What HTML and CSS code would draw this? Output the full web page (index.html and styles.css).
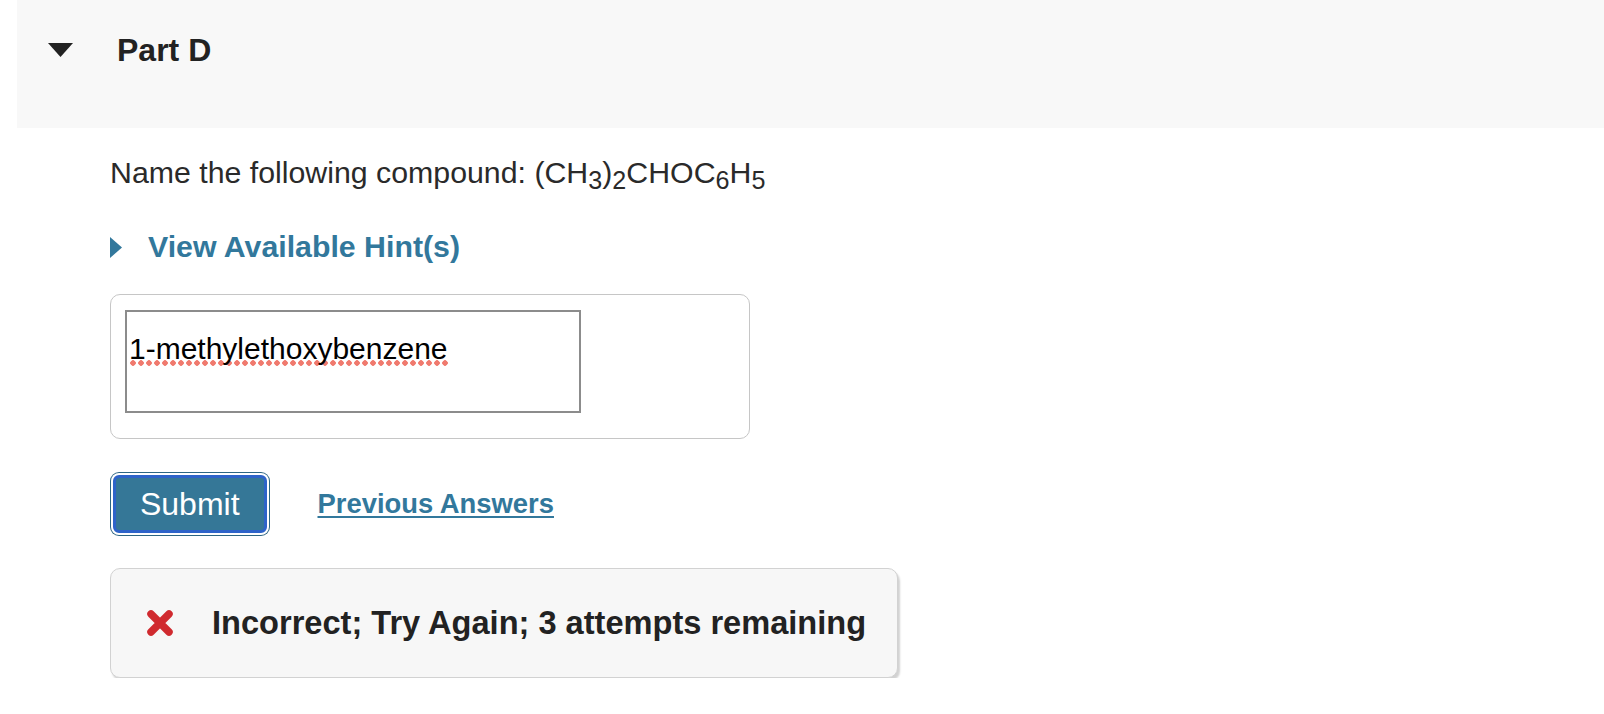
FILE: index.html
```html
<!DOCTYPE html>
<html>
<head>
<meta charset="utf-8">
<link rel="stylesheet" href="styles.css">
</head>
<body>
<div class="part-header">
  <div class="part-row">
    <svg class="caret-down" width="25" height="14" viewBox="0 0 25 14"><polygon points="0,0 25,0 12.5,14" fill="#222"/></svg>
    <span class="part-title">Part D</span>
  </div>
</div>
<div class="content">
  <p class="question">Name the following compound: (CH<sub>3</sub>)<sub>2</sub>CHOC<sub>6</sub>H<sub>5</sub></p>
  <div class="hint">
    <svg class="caret-right" width="12" height="21" viewBox="0 0 12 21"><polygon points="0,0 12,10.5 0,21" fill="#32789c"/></svg>
    <span class="hint-text">View Available Hint(s)</span>
  </div>
  <div class="answer-box">
    <div class="answer-input"><span class="misspelled">1-methylethoxybenzene</span></div>
  </div>
  <div class="actions">
    <button class="submit">Submit</button>
    <a class="prev" href="#">Previous Answers</a>
  </div>
  <div class="feedback">
    <svg class="xicon" width="28" height="28" viewBox="0 0 28 28"><path d="M5 5 L23 23 M23 5 L5 23" stroke="#d02a2f" stroke-width="7.5" stroke-linecap="round"/></svg>
    <span class="feedback-text">Incorrect; Try Again; 3 attempts remaining</span>
  </div>
</div>
</body>
</html>
```
FILE: styles.css
```css
html, body {
  margin: 0;
  padding: 0;
  background: #fff;
  font-family: "Liberation Sans", Arial, sans-serif;
  color: #222;
}
.part-header {
  margin-left: 17px;
  height: 128px;
  background: #f8f8f8;
  box-sizing: border-box;
  padding-top: 25px;
  padding-left: 31px;
}
.part-row {
  display: flex;
  align-items: center;
  height: 50px;
}
.caret-down {
  display: block;
  margin-right: 44px;
}
.part-title {
  font-size: 32px;
  font-weight: bold;
  color: #222;
}
.content {
  padding-left: 110px;
}
.question {
  margin: 28px 0 0 0;
  font-size: 30.3px;
  line-height: 34px;
  color: #2a2a2a;
}
.question sub {
  font-size: 0.83em;
  vertical-align: -0.25em;
  line-height: 0;
}
.hint {
  margin-top: 40px;
  display: flex;
  align-items: center;
  height: 34px;
}
.caret-right {
  display: block;
  margin-right: 26px;
}
.hint-text {
  font-size: 30.3px;
  font-weight: bold;
  color: #32789c;
  line-height: 34px;
}
.answer-box {
  margin-top: 30px;
  width: 640px;
  height: 145px;
  box-sizing: border-box;
  border: 1.5px solid #c6c6c6;
  border-radius: 10px;
  padding: 15px 0 0 14px;
}
.answer-input {
  width: 456px;
  height: 103px;
  box-sizing: border-box;
  border: 2px solid #8c8c8c;
  padding: 20px 0 0 2px;
  font-size: 30px;
  line-height: 34px;
  color: #000;
}
.misspelled {
  display: inline-block;
  padding-bottom: 2px;
  background-image: radial-gradient(circle, #f07a6e 2.5px, transparent 3px);
  background-size: 8px 6px;
  background-repeat: repeat-x;
  background-position: 0 28px;
}
.actions {
  margin-top: 33px;
  display: flex;
  align-items: center;
}
.submit {
  margin: 3px;
  width: 153.5px;
  height: 57.5px;
  box-sizing: border-box;
  border: 3px solid #2e63c9;
  border-radius: 6px;
  background: #357797;
  box-shadow: 0 0 0 2px #fff, 0 0 0 3px #2d6582;
  color: #fff;
  font-family: "Liberation Sans", Arial, sans-serif;
  font-size: 32px;
  padding: 0;
  line-height: 1;
}
.prev {
  margin-left: 48px;
  font-size: 27.4px;
  font-weight: bold;
  color: #32789c;
  text-decoration: underline;
  text-underline-offset: 3px;
}
.feedback {
  margin-top: 32px;
  width: 788px;
  height: 110px;
  box-sizing: border-box;
  background: #f7f7f7;
  border: 1.5px solid #d2d2d2;
  border-radius: 10px;
  box-shadow: 2px 3px 2px rgba(0, 0, 0, 0.18);
  display: flex;
  align-items: center;
  padding-left: 35px;
}
.xicon {
  display: block;
  margin-right: 38px;
}
.feedback-text {
  font-size: 32.6px;
  font-weight: bold;
  color: #222;
}
```
